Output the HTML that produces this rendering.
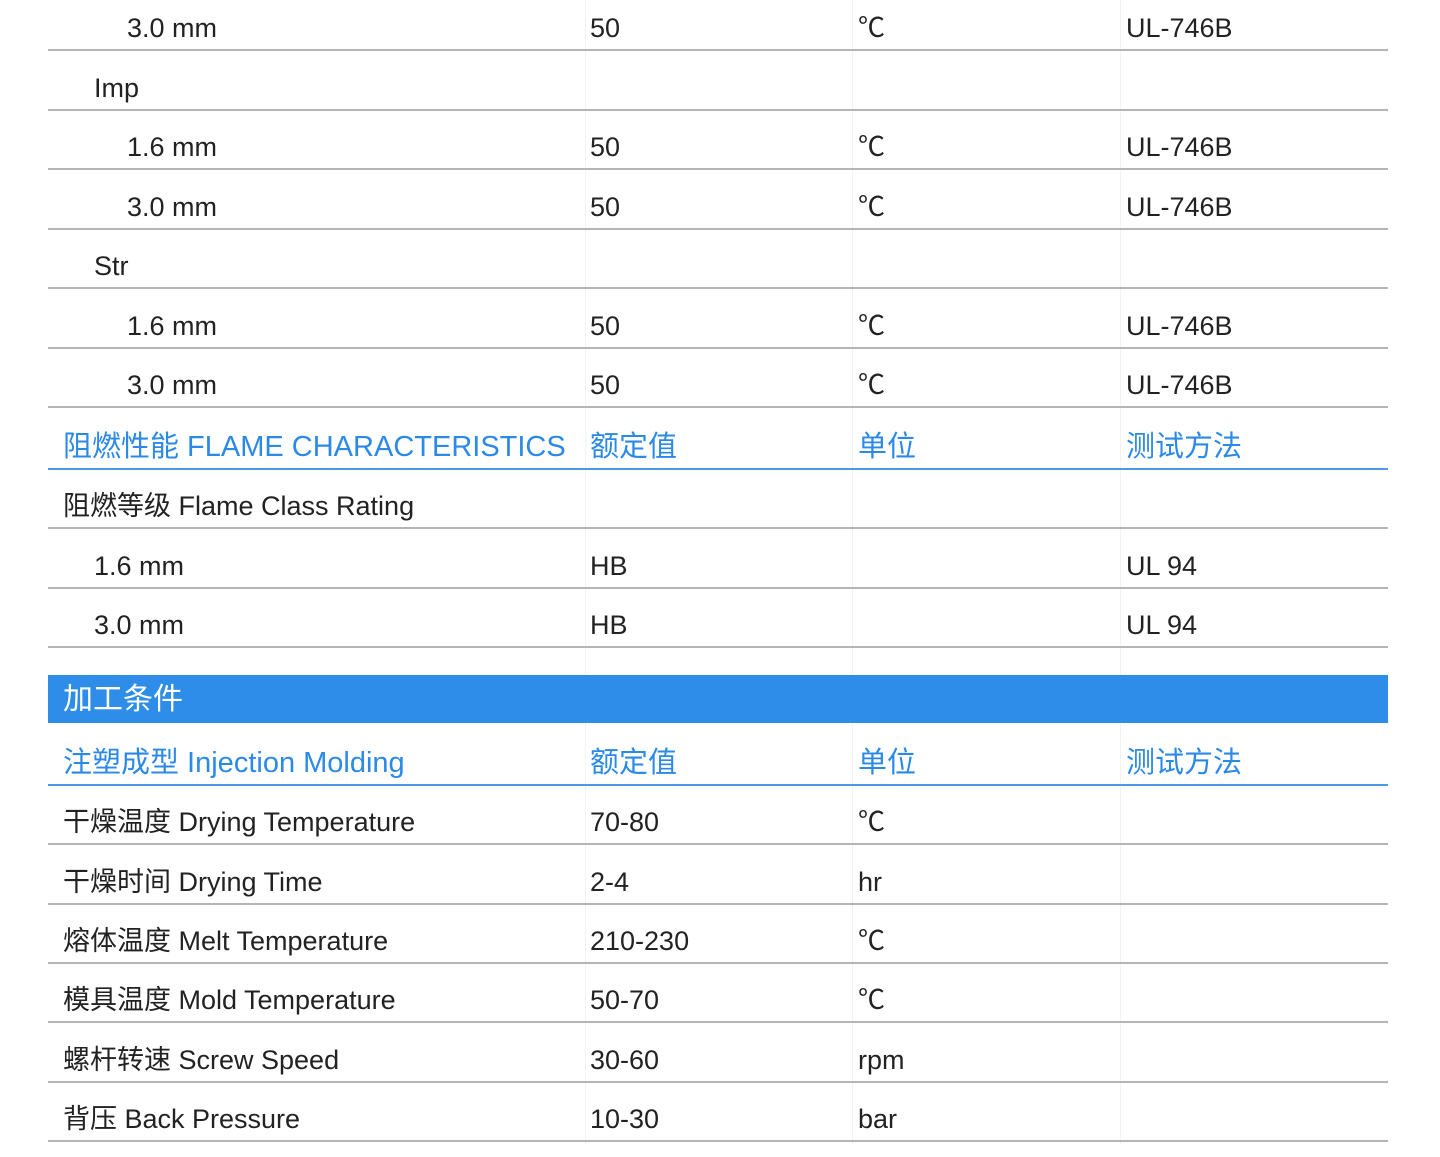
<!DOCTYPE html>
<html><head><meta charset="utf-8"><style>
body{margin:0;width:1440px;height:1157px;background:#fff;position:relative;overflow:hidden;font-family:"Liberation Sans","Noto Sans CJK SC",sans-serif;font-size:27px;color:#222}
.r{position:absolute;left:48px;width:1340px;height:46px;padding-top:12px;border-bottom:2px solid #b5b5b5;box-sizing:content-box}
.r span{position:absolute;top:14px;line-height:46px;white-space:nowrap}
.h{color:#2b8ae8;border-bottom:2px solid #4a9ae8}
.c2{left:542px}.c3{left:810px}.c4{left:1078px}
.l1{left:15px}.l2{left:46px}.l3{left:79px}
.v{position:absolute;top:0;width:1px;background:#f3f3f3;height:1145px}
.bar{position:absolute;left:48px;top:675px;width:1340px;height:48px;background:#2e8de8;color:#fff;font-size:30px;line-height:50px;padding-left:15px;box-sizing:border-box}
</style></head><body>
<div class="v" style="left:585px"></div><div class="v" style="left:852px"></div><div class="v" style="left:1120px"></div>
<div class="r" style="top:-9px"><span class="l3">3.0 mm</span><span class="c2">50</span><span class="c3">℃</span><span class="c4">UL-746B</span></div>
<div class="r" style="top:51px"><span class="l2">Imp</span></div>
<div class="r" style="top:110px"><span class="l3">1.6 mm</span><span class="c2">50</span><span class="c3">℃</span><span class="c4">UL-746B</span></div>
<div class="r" style="top:170px"><span class="l3">3.0 mm</span><span class="c2">50</span><span class="c3">℃</span><span class="c4">UL-746B</span></div>
<div class="r" style="top:229px"><span class="l2">Str</span></div>
<div class="r" style="top:289px"><span class="l3">1.6 mm</span><span class="c2">50</span><span class="c3">℃</span><span class="c4">UL-746B</span></div>
<div class="r" style="top:348px"><span class="l3">3.0 mm</span><span class="c2">50</span><span class="c3">℃</span><span class="c4">UL-746B</span></div>
<div class="r h" style="top:410px;font-size:29px"><span class="l1">阻燃性能 FLAME CHARACTERISTICS</span><span class="c2">额定值</span><span class="c3">单位</span><span class="c4">测试方法</span></div>
<div class="r" style="top:469px"><span class="l1">阻燃等级 Flame Class Rating</span></div>
<div class="r" style="top:529px"><span class="l2">1.6 mm</span><span class="c2">HB</span><span class="c4">UL 94</span></div>
<div class="r" style="top:588px"><span class="l2">3.0 mm</span><span class="c2">HB</span><span class="c4">UL 94</span></div>
<div class="bar">加工条件</div>
<div class="r h" style="top:726px;font-size:29px"><span class="l1">注塑成型 Injection Molding</span><span class="c2">额定值</span><span class="c3">单位</span><span class="c4">测试方法</span></div>
<div class="r" style="top:785px"><span class="l1">干燥温度 Drying Temperature</span><span class="c2">70-80</span><span class="c3">℃</span></div>
<div class="r" style="top:845px"><span class="l1">干燥时间 Drying Time</span><span class="c2">2-4</span><span class="c3">hr</span></div>
<div class="r" style="top:904px"><span class="l1">熔体温度 Melt Temperature</span><span class="c2">210-230</span><span class="c3">℃</span></div>
<div class="r" style="top:963px"><span class="l1">模具温度 Mold Temperature</span><span class="c2">50-70</span><span class="c3">℃</span></div>
<div class="r" style="top:1023px"><span class="l1">螺杆转速 Screw Speed</span><span class="c2">30-60</span><span class="c3">rpm</span></div>
<div class="r" style="top:1082px"><span class="l1">背压 Back Pressure</span><span class="c2">10-30</span><span class="c3">bar</span></div>
</body></html>
